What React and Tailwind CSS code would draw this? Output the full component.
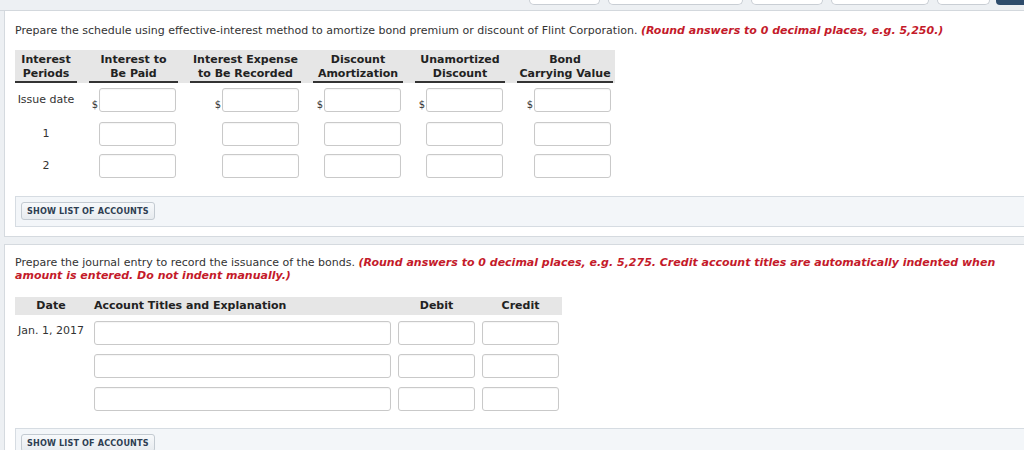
import React from "react";

const FONT = "font-['DejaVu_Sans',sans-serif]";

function Box({ w = "w-[77px]" }) {
  return (
    <div
      className={`${w} h-[24px] bg-white border border-[#c9c9c9] rounded-[3px] shadow-[inset_0_1px_1px_rgba(0,0,0,0.04)]`}
    />
  );
}

function Cell({ dollar }) {
  return (
    <div className="flex justify-end items-end pr-[2px]">
      {dollar && <span className="text-[10px] leading-[12px] mr-[1px] mb-[1px] text-[#333]">$</span>}
      <Box />
    </div>
  );
}

function ShowList({ last }) {
  return (
    <div className={`ml-[10px] bg-[#f3f6f9] border-t border-l ${last ? "" : "border-b"} border-[#d6dce2] px-[5px] pt-[5px] ${last ? "h-[24px]" : "h-[31px]"}`}>
      <button className="h-[18px] px-[5px] bg-gradient-to-b from-[#f7f9fb] to-[#e7ebef] border border-[#c3cad1] rounded-[3px] text-[9px] font-bold text-[#2e3e52] tracking-[0.15px] leading-[16px] font-['DejaVu_Sans_Condensed','DejaVu_Sans',sans-serif]">
        SHOW LIST OF ACCOUNTS
      </button>
    </div>
  );
}

export default function App() {
  const heads = [
    ["Interest", "Periods"],
    ["Interest to", "Be Paid"],
    ["Interest Expense", "to Be Recorded"],
    ["Discount", "Amortization"],
    ["Unamortized", "Discount"],
    ["Bond", "Carrying Value"],
  ];
  const cols = "grid grid-cols-[62px_89px_111px_90px_90px_96px] gap-x-[12px]";
  const tabs = [
    "w-[71px]",
    "w-[135px]",
    "w-[72px]",
    "w-[98px]",
    "w-[53px]",
  ];
  return (
    <div className={`w-[1024px] h-[450px] overflow-hidden bg-[#edf0f3] text-[#333] text-[11px] ${FONT}`}>
      {/* top strip */}
      <div className="h-[11px] border-b border-[#d3d8dd] flex items-start pl-[529px] gap-[8px]">
        {tabs.map((t, i) => (
          <div key={i} className={`${t} h-[5px] bg-white border border-t-0 border-[#c9ced4] rounded-b-[5px]`} />
        ))}
        <div className="flex-1 -ml-[2px] h-[5px] bg-[#2f4d6c] rounded-bl-[4px]" />
      </div>

      {/* panel 1 */}
      <div className="ml-[4px] bg-white border-l border-b border-[#d5dadf] pt-[13px] pb-[9px]">
        <div className="pl-[10px] leading-[14px] whitespace-nowrap">
          Prepare the schedule using effective-interest method to amortize bond premium or discount of Flint Corporation.{" "}
          <span className="italic font-bold text-[#c41a2a]">(Round answers to 0 decimal places, e.g. 5,250.)</span>
        </div>

        <div className={`${cols} w-[600px] ml-[10px] mt-[12px] bg-[#e6e6e6] pt-[3px]`}>
          {heads.map((h, i) => (
            <div key={i} className="border-b-2 border-[#333] text-center font-bold text-[#222] leading-[14px] whitespace-nowrap">
              <div>{h[0]}</div>
              <div>{h[1]}</div>
            </div>
          ))}
        </div>

        {/* rows */}
        <div className={`${cols} w-[600px] ml-[10px] mt-[5px] h-[24px]`}>
          <div className="flex items-center justify-center whitespace-nowrap">Issue date</div>
          {[1, 2, 3, 4, 5].map((i) => (
            <Cell key={i} dollar />
          ))}
        </div>
        <div className={`${cols} w-[600px] ml-[10px] mt-[10px] h-[24px]`}>
          <div className="flex items-center justify-center">1</div>
          {[1, 2, 3, 4, 5].map((i) => (
            <Cell key={i} />
          ))}
        </div>
        <div className={`${cols} w-[600px] ml-[10px] mt-[8px] h-[24px]`}>
          <div className="flex items-center justify-center">2</div>
          {[1, 2, 3, 4, 5].map((i) => (
            <Cell key={i} />
          ))}
        </div>

        <div className="mt-[18px]">
          <ShowList />
        </div>
      </div>

      {/* panel 2 */}
      <div className="mt-[7px] ml-[4px] bg-white border-l border-t border-[#d5dadf] pt-[11px]">
        <div className="pl-[10px] leading-[13px] whitespace-nowrap">
          Prepare the journal entry to record the issuance of the bonds.{" "}
          <span className="italic font-bold text-[#c41a2a]">
            (Round answers to 0 decimal places, e.g. 5,275. Credit account titles are automatically indented when
            <br />
            amount is entered. Do not indent manually.)
          </span>
        </div>

        <div className="ml-[10px] mt-[15px] w-[547px] grid grid-cols-[72px_297px_77px_77px] gap-x-[7px] pr-[3px] bg-[#e6e6e6] h-[18px] items-center font-bold text-[#222] whitespace-nowrap">
          <div className="text-center">Date</div>
          <div>Account Titles and Explanation</div>
          <div className="text-center">Debit</div>
          <div className="text-center">Credit</div>
        </div>

        {[0, 1, 2].map((r) => (
          <div
            key={r}
            className={`ml-[10px] w-[547px] grid grid-cols-[72px_297px_77px_77px] gap-x-[7px] pr-[3px] h-[24px] ${r === 0 ? "mt-[6px]" : "mt-[9px]"}`}
          >
            <div className="pl-[3px] leading-[20px] whitespace-nowrap">{r === 0 ? "Jan. 1, 2017" : ""}</div>
            <Box w="w-[297px]" />
            <Box />
            <Box />
          </div>
        ))}

        <div className="mt-[17px]">
          <ShowList last />
        </div>
      </div>
    </div>
  );
}
